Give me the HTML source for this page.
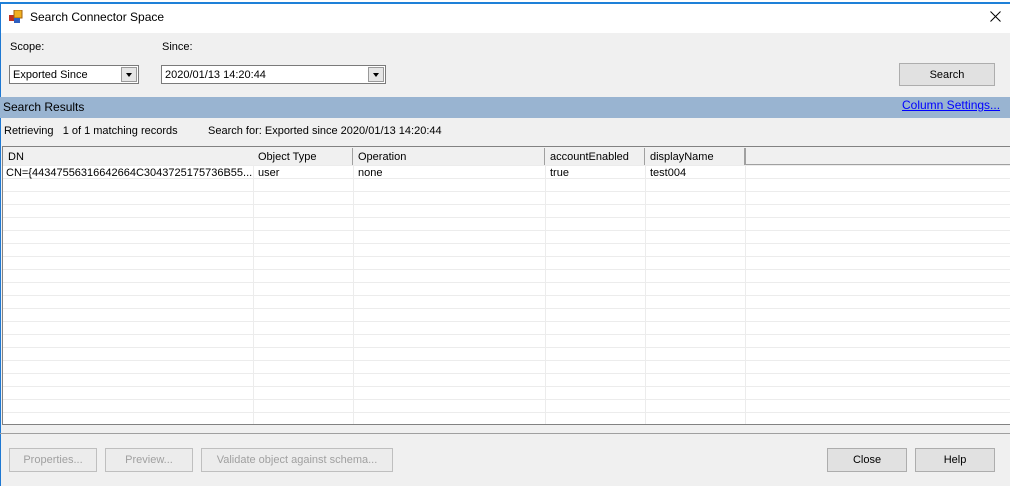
<!DOCTYPE html>
<html><head><style>
*{box-sizing:border-box;margin:0;padding:0}
body{width:1010px;height:486px;background:#f0f0f0;font-family:"Liberation Sans","Noto Sans CJK JP",sans-serif;font-size:11px;color:#000;position:relative;overflow:hidden}
.a{position:absolute}
.btn{position:absolute;background:#e1e1e1;border:1px solid #adadad;text-align:center;line-height:22px;font-size:11px}
.dis{color:#a0a0a0;border-color:#bfbfbf;background:#ececec}
.combo{position:absolute;background:#fff;border:1px solid #7a7a7a;height:19px;line-height:18px;padding-left:3px;font-size:11px}
.arr{position:absolute;right:1px;top:1px;width:16px;height:15px;background:#e6e6e6;border:1px solid #999}
.arr:after{content:"";position:absolute;left:4px;top:5px;border-left:3px solid transparent;border-right:3px solid transparent;border-top:4px solid #000}
.hd{position:absolute;top:148px;height:17px;line-height:19px;background:#f0f0f0;border-right:2px solid #a0a0a0;padding-left:5px}
.cell{position:absolute;top:166px;line-height:14px;padding-left:4px}
</style></head><body>
<div class="a" style="left:0;top:0;width:1010px;height:2px;background:#fff"></div>
<div class="a" style="left:0;top:2px;width:1010px;height:2px;background:#1e80d8"></div>
<div class="a" style="left:0;top:4px;width:1010px;height:29px;background:#fff"></div>
<div class="a" style="left:0;top:3px;width:1px;height:483px;background:#1e78d2"></div>
<svg class="a" style="left:9px;top:10px" width="14" height="14"><rect x="0" y="5" width="6" height="6" fill="#c03020"/><rect x="5" y="0" width="8" height="8" fill="#f0b020" stroke="#a06010" stroke-width="1"/><rect x="5" y="8" width="6" height="5" fill="#3060c0"/></svg>
<div class="a" style="left:30px;top:10px;font-size:12px">Search Connector Space</div>
<svg class="a" style="left:990px;top:11px" width="11" height="11"><path d="M0.5 0.5L10.5 10.5M10.5 0.5L0.5 10.5" stroke="#000" stroke-width="1"/></svg>
<div class="a" style="left:10px;top:41px">Scope:</div>
<div class="a" style="left:162px;top:41px">Since:</div>
<div class="combo" style="left:9px;top:65px;width:130px">Exported Since<div class="arr"></div></div>
<div class="combo" style="left:161px;top:65px;width:225px">2020/01/13 14:20:44<div class="arr"></div></div>
<div class="btn" style="left:899px;top:63px;width:96px;height:23px">Search</div>
<div class="a" style="left:0;top:97px;width:1010px;height:21px;background:#99b4d1"></div>
<div class="a" style="left:3px;top:100px;font-size:12px">Search Results</div>
<div class="a" style="left:902px;top:98px;font-size:12px;color:#0000ff;text-decoration:underline">Column Settings...</div>
<div class="a" style="left:4px;top:125px">Retrieving&nbsp;&nbsp; 1 of 1 matching records</div>
<div class="a" style="left:208px;top:125px">Search for: Exported since 2020/01/13 14:20:44</div>
<div class="a" style="left:2px;top:146px;width:1008px;height:279px;background:#fff;border:1px solid #828282;border-right:none;
background-image:linear-gradient(#ececec 1px,transparent 1px);background-size:100% 13px;background-position:0 31px"></div>
<div class="a" style="left:253px;top:164px;width:1px;height:260px;background:#ececec"></div>
<div class="a" style="left:353px;top:164px;width:1px;height:260px;background:#ececec"></div>
<div class="a" style="left:545px;top:164px;width:1px;height:260px;background:#ececec"></div>
<div class="a" style="left:645px;top:164px;width:1px;height:260px;background:#ececec"></div>
<div class="a" style="left:745px;top:164px;width:1px;height:260px;background:#ececec"></div>
<div class="a" style="left:3px;top:147px;width:1007px;height:18px;background:#f0f0f0;border-bottom:1px solid #a0a0a0"></div>
<div class="hd" style="left:3px;width:252px">DN</div>
<div class="hd" style="left:253px;width:101px">Object Type</div>
<div class="hd" style="left:353px;width:193px">Operation</div>
<div class="hd" style="left:545px;width:101px">accountEnabled</div>
<div class="hd" style="left:645px;width:101px">displayName</div>
<div class="cell" style="left:2px">CN={44347556316642664C3043725175736B55...</div>
<div class="cell" style="left:254px">user</div>
<div class="cell" style="left:354px">none</div>
<div class="cell" style="left:546px">true</div>
<div class="cell" style="left:646px">test004</div>
<div class="a" style="left:0;top:433px;width:1010px;height:1px;background:#a0a0a0"></div>
<div class="btn dis" style="left:9px;top:448px;width:88px;height:24px">Properties...</div>
<div class="btn dis" style="left:105px;top:448px;width:88px;height:24px">Preview...</div>
<div class="btn dis" style="left:201px;top:448px;width:192px;height:24px">Validate object against schema...</div>
<div class="btn" style="left:827px;top:448px;width:80px;height:24px">Close</div>
<div class="btn" style="left:915px;top:448px;width:80px;height:24px">Help</div>
</body></html>
